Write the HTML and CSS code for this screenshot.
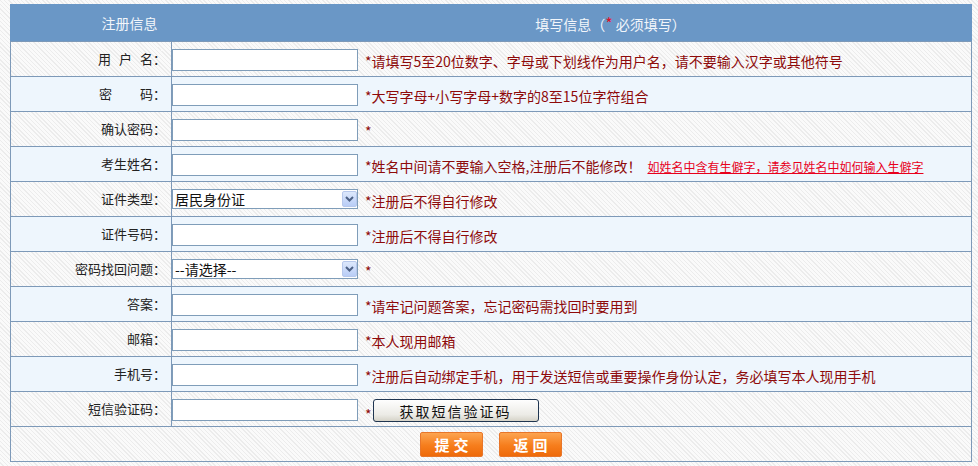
FILE: index.html
```html
<!DOCTYPE html>
<html lang="zh-CN">
  <head>
    <meta charset="UTF-8" />
    <title>注册信息</title>
    <link rel="stylesheet" href="styles.css">
  </head>
  <body>
    <div class="reg">
      <div class="reg-head">
        <div class="head-left">注册信息</div>
        <div class="head-right">填写信息（<span class="star">*</span> 必须填写）</div>
      </div>

      <div class="row">
        <div class="label"><span class="gap-s">用户</span>名：</div>
        <div class="field"><input class="txt" type="text" /><span class="hint">*请填写5至20位数字、字母或下划线作为用户名，请不要输入汉字或其他符号</span></div>
      </div>
      <div class="row alt">
        <div class="label"><span class="gap-l">密</span>码：</div>
        <div class="field"><input class="txt" type="password" /><span class="hint">*大写字母+小写字母+数字的8至15位字符组合</span></div>
      </div>
      <div class="row">
        <div class="label">确认密码：</div>
        <div class="field"><input class="txt" type="password" /><span class="hint">*</span></div>
      </div>
      <div class="row alt">
        <div class="label">考生姓名：</div>
        <div class="field"><input class="txt" type="text" /><span class="hint">*姓名中间请不要输入空格,注册后不能修改！</span><a class="rare" href="#">如姓名中含有生僻字，请参见姓名中如何输入生僻字</a></div>
      </div>
      <div class="row">
        <div class="label">证件类型：</div>
        <div class="field">
          <span class="sel">
            <select><option>居民身份证</option></select>
            <span class="sel-btn"><svg width="9" height="6" viewBox="0 0 9 6"><path d="M1 1l3.5 3.5L8 1" fill="none" stroke="#4d6185" stroke-width="2"/></svg></span>
          </span><span class="hint">*注册后不得自行修改</span>
        </div>
      </div>
      <div class="row alt">
        <div class="label">证件号码：</div>
        <div class="field"><input class="txt" type="text" /><span class="hint">*注册后不得自行修改</span></div>
      </div>
      <div class="row">
        <div class="label">密码找回问题：</div>
        <div class="field">
          <span class="sel">
            <select><option>--请选择--</option></select>
            <span class="sel-btn"><svg width="9" height="6" viewBox="0 0 9 6"><path d="M1 1l3.5 3.5L8 1" fill="none" stroke="#4d6185" stroke-width="2"/></svg></span>
          </span><span class="hint">*</span>
        </div>
      </div>
      <div class="row alt">
        <div class="label">答案：</div>
        <div class="field"><input class="txt" type="text" /><span class="hint">*请牢记问题答案，忘记密码需找回时要用到</span></div>
      </div>
      <div class="row">
        <div class="label">邮箱：</div>
        <div class="field"><input class="txt" type="text" /><span class="hint">*本人现用邮箱</span></div>
      </div>
      <div class="row alt">
        <div class="label">手机号：</div>
        <div class="field"><input class="txt" type="text" /><span class="hint">*注册后自动绑定手机，用于发送短信或重要操作身份认定，务必填写本人现用手机</span></div>
      </div>
      <div class="row">
        <div class="label">短信验证码：</div>
        <div class="field"><input class="txt" type="text" /><span class="hint star-only">*</span><button class="code-btn" type="button">获取短信验证码</button></div>
      </div>
      <div class="row-btns">
        <button class="orange" type="submit">提交</button>
        <button class="orange" type="button">返回</button>
      </div>
    </div>
  </body>
</html>
```

FILE: styles.css
```css
html {
  background-color: #f6f6f6;
  background-image: repeating-linear-gradient(
    45deg,
    #fafafa 0,
    #fafafa 2px,
    #ececec 2px,
    #ececec 3px
  );
  height: 100%;
}
body {
  margin: 0;
  padding: 4px 0 0 10px;
  font-family: "Noto Sans CJK SC", "Liberation Sans", sans-serif;
  font-size: 13px;
  color: #222;
}

.reg {
  width: 960px;
  border-left: 1px solid #7d99b8;
  border-right: 1px solid #7d99b8;
}

.reg-head {
  display: flex;
  height: 37px;
  align-items: center;
  background-color: #6a97c6;
  color: #f2f6fb;
  font-size: 14px;
  border-bottom: 1px solid #7d99b8;
  margin-left: -1px;
  margin-right: -1px;
}
.head-left {
  width: 239px;
  text-align: center;
}
.head-right {
  flex: 1;
  text-align: center;
}
.star {
  color: #e0102a;
  font-size: 16px;
}

.row {
  display: flex;
  height: 34px;
  border-bottom: 1px solid #7d99b8;
}
.row.alt {
  background-color: #eef6fd;
}
.label {
  width: 155px;
  padding-right: 5px;
  border-right: 1px solid #7d99b8;
  text-align: right;
  line-height: 34px;
}
.gap-s {
  letter-spacing: 8px;
}
.gap-l {
  letter-spacing: 28px;
}
.field {
  flex: 1;
  display: flex;
  align-items: center;
  padding-top: 1px;
}

.txt {
  box-sizing: border-box;
  width: 186px;
  height: 22px;
  margin: 0;
  border: 1px solid #7f9db9;
  background: #fff;
  font-size: 13px;
}

.hint {
  margin-left: 7px;
  margin-top: 3px;
  font-size: 14px;
  color: #8e0a0a;
}
.hint.star-only {
  margin-top: 8px;
  margin-right: 1px;
}
.rare {
  margin-left: 6px;
  margin-top: 4px;
  font-size: 12px;
  color: #e8001c;
  text-decoration: underline;
}

.sel {
  position: relative;
  display: inline-block;
  width: 186px;
  height: 20px;
  margin-bottom: 2px;
}
.sel select {
  box-sizing: border-box;
  width: 186px;
  height: 20px;
  margin: 0;
  padding: 0 0 0 2px;
  border: 1px solid #7f9db9;
  background: #fff;
  font-family: "Noto Sans CJK SC", sans-serif;
  font-size: 14px;
  color: #111;
  appearance: none;
  -webkit-appearance: none;
  line-height: 18px;
}
.sel-btn {
  position: absolute;
  right: 1px;
  top: 2px;
  width: 15px;
  height: 16px;
  box-sizing: border-box;
  border: 1px solid #b7c8ec;
  border-radius: 2px;
  background: linear-gradient(#dde8fc, #b9cdf6);
  display: flex;
  align-items: center;
  justify-content: center;
}

.code-btn {
  width: 166px;
  height: 23px;
  margin: 2px 0 0 0;
  padding: 0;
  border: 1px solid #1f3550;
  border-radius: 3px;
  background: linear-gradient(#fefefe, #ecebe6 70%, #d6d3c8);
  font-family: "Noto Sans CJK SC", sans-serif;
  font-size: 14px;
  letter-spacing: 2px;
  color: #111;
  cursor: pointer;
}

.row-btns {
  display: flex;
  justify-content: center;
  gap: 16px;
  height: 34px;
  align-items: center;
  border-bottom: 1px solid #7d99b8;
}
.orange {
  width: 63px;
  height: 25px;
  padding: 0 0 0 4px;
  border: 1px solid #e8762a;
  border-radius: 2px;
  background: linear-gradient(#fca450, #f67d1c 55%, #ee6a0a);
  color: #fff;
  font-family: "Noto Sans CJK SC", sans-serif;
  font-size: 15px;
  font-weight: bold;
  letter-spacing: 4px;
  cursor: pointer;
}
```
